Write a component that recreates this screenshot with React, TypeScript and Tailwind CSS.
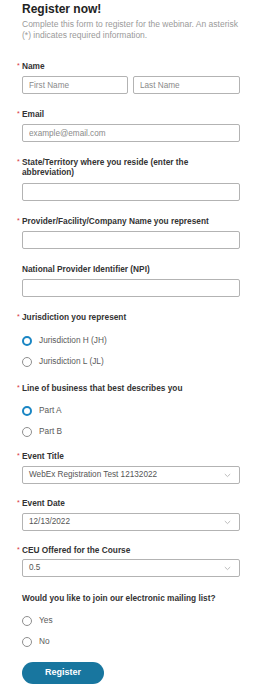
import { useState } from 'react';

const font = { fontFamily: '"Liberation Sans", Arial, sans-serif' };

function Label({ text, required }: { text: string; required?: boolean }) {
  return (
    <div className="relative text-[8.3px] leading-[10px] font-bold text-[#333]">
      {required && (
        <span className="absolute -left-[5px] top-[0px] text-[7px] text-[#d9343a] font-normal">*</span>
      )}
      {text}
    </div>
  );
}

function TextInput({ placeholder = '', className = '' }: { placeholder?: string; className?: string }) {
  return (
    <input
      type="text"
      placeholder={placeholder}
      className={`block h-[18px] rounded-[2px] border border-[#b3b3b3] bg-white px-[6px] text-[8.2px] text-[#444] placeholder:text-[#8a8a8a] outline-none ${className}`}
    />
  );
}

function Select({ value, className = '' }: { value: string; className?: string }) {
  return (
    <div
      className={`flex h-[18px] w-full items-center justify-between rounded-[2px] border border-[#b3b3b3] bg-white pl-[6px] pr-[8px] text-[8.2px] text-[#555] ${className}`}
    >
      <span>{value}</span>
      <svg width="7" height="5" viewBox="0 0 7 5" fill="none">
        <path d="M0.8 1 L3.5 3.6 L6.2 1" stroke="#b5b5b5" strokeWidth="0.9" />
      </svg>
    </div>
  );
}

function Radio({ label, checked, onClick }: { label: string; checked: boolean; onClick: () => void }) {
  return (
    <div className="flex h-[21px] cursor-pointer items-center" onClick={onClick}>
      <span
        className={`box-border h-[10px] w-[10px] rounded-full bg-white ${
          checked ? 'border-[2.5px] border-[#1a86c4]' : 'border border-[#8f8f8f]'
        }`}
      />
      <span className="ml-[7px] text-[8.3px] text-[#5a5a5a]">{label}</span>
    </div>
  );
}

export default function App() {
  const [jurisdiction, setJurisdiction] = useState('JH');
  const [business, setBusiness] = useState('A');
  const [mailing, setMailing] = useState('');

  return (
    <div className="min-h-[684px] w-[258px] bg-white pl-[22px] pr-[18px]" style={font}>
      <h1 className="pt-[2px] text-[12px] font-bold leading-[14px] text-[#222]">Register now!</h1>
      <p className="mt-[3px] text-[8.5px] leading-[10.5px] text-[#9a9a9a]">
        Complete this form to register for the webinar. An asterisk (*) indicates required information.
      </p>

      <div className="mt-[21px]">
        <Label text="Name" required />
        <div className="mt-[5px] flex gap-[5px]">
          <TextInput placeholder="First Name" className="w-[106px]" />
          <TextInput placeholder="Last Name" className="w-[107px]" />
        </div>
      </div>

      <div className="mt-[15px]">
        <Label text="Email" required />
        <TextInput placeholder="example@email.com" className="mt-[5px] w-full" />
      </div>

      <div className="mt-[15px]">
        <Label text="State/Territory where you reside (enter the abbreviation)" required />
        <TextInput className="mt-[6px] w-full" />
      </div>

      <div className="mt-[15px]">
        <Label text="Provider/Facility/Company Name you represent" required />
        <TextInput className="mt-[5px] w-full" />
      </div>

      <div className="mt-[15px]">
        <Label text="National Provider Identifier (NPI)" />
        <TextInput className="mt-[5px] w-full" />
      </div>

      <div className="mt-[15px]">
        <Label text="Jurisdiction you represent" required />
        <div className="mt-[8px]">
          <Radio label="Jurisdiction H (JH)" checked={jurisdiction === 'JH'} onClick={() => setJurisdiction('JH')} />
          <Radio label="Jurisdiction L (JL)" checked={jurisdiction === 'JL'} onClick={() => setJurisdiction('JL')} />
        </div>
      </div>

      <div className="mt-[11px]">
        <Label text="Line of business that best describes you" required />
        <div className="mt-[7px]">
          <Radio label="Part A" checked={business === 'A'} onClick={() => setBusiness('A')} />
          <Radio label="Part B" checked={business === 'B'} onClick={() => setBusiness('B')} />
        </div>
      </div>

      <div className="mt-[9px]">
        <Label text="Event Title" required />
        <Select value="WebEx Registration Test 12132022" className="mt-[5px]" />
      </div>

      <div className="mt-[14px]">
        <Label text="Event Date" required />
        <Select value="12/13/2022" className="mt-[5px]" />
      </div>

      <div className="mt-[14px]">
        <Label text="CEU Offered for the Course" required />
        <Select value="0.5" className="mt-[4px]" />
      </div>

      <div className="mt-[16px]">
        <Label text="Would you like to join our electronic mailing list?" />
        <div className="mt-[7px]">
          <Radio label="Yes" checked={mailing === 'yes'} onClick={() => setMailing('yes')} />
          <Radio label="No" checked={mailing === 'no'} onClick={() => setMailing('no')} />
        </div>
      </div>

      <button className="mt-[10px] h-[22px] w-[82px] rounded-full bg-[#18769f] text-[9px] font-bold text-white">
        Register
      </button>
    </div>
  );
}
